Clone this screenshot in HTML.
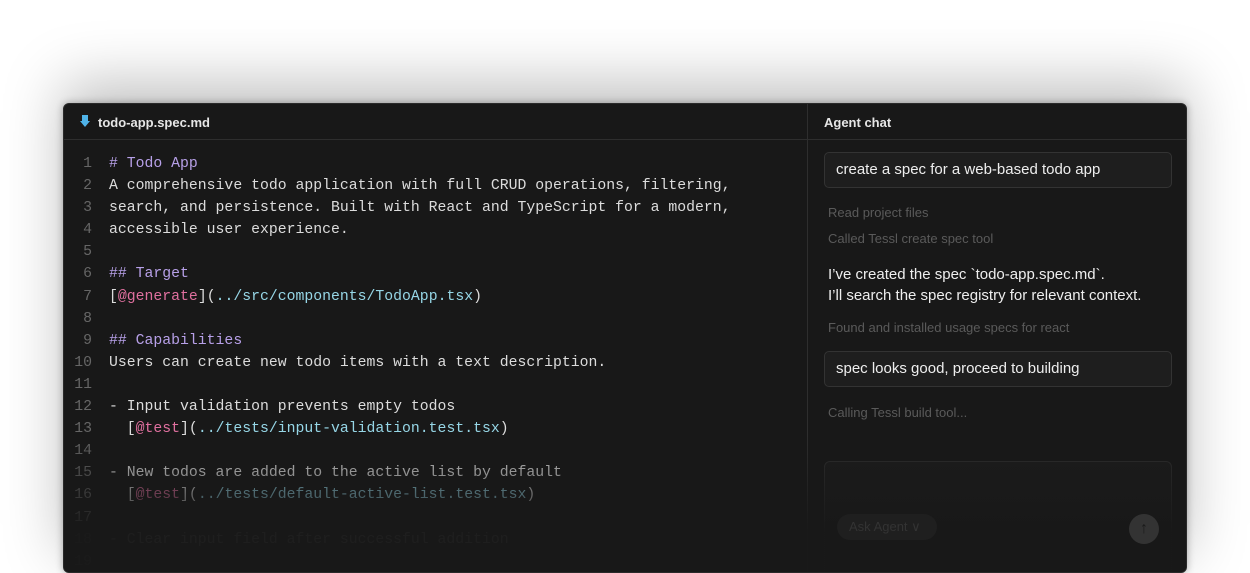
<!DOCTYPE html>
<html><head><style>
*{margin:0;padding:0;box-sizing:border-box}
body{width:1250px;height:552px;background:#fff;overflow:hidden;position:relative;font-family:"Liberation Sans",sans-serif}
.win{position:absolute;left:63px;top:103px;width:1124px;height:470px;background:#181818;border-radius:6px;box-shadow:0 -20px 60px rgba(0,0,0,.25),0 0 8px rgba(0,0,0,.3);overflow:hidden;border:1px solid #2a2a2a}
.hdr{position:absolute;top:0;left:0;right:0;height:36px;border-bottom:1px solid #2e2e2e}
.ft{position:absolute;left:34px;top:11px;color:#e6e6e6;font-size:13px;font-weight:bold}
.div{position:absolute;left:743px;top:0;bottom:0;width:1px;background:#2e2e2e}
.code{position:absolute;left:0;top:49px;font-family:"Liberation Mono",monospace;font-size:14.8px;color:#dcdcdc}
.l{height:22.1px;line-height:22.1px;white-space:pre;position:relative}
.n{display:inline-block;width:28px;text-align:right;color:#666;margin-right:17px}
.h{color:#b7a0e8}.p{color:#e0709f}.c{color:#96d6e6}
.ac{position:absolute;left:760px;top:11px;color:#e6e6e6;font-size:13px;font-weight:bold}
.bub{position:absolute;left:760px;width:348px;height:36px;border:1px solid #333;border-radius:5px;background:#1e1e1e;color:#eee;font-size:15px;padding:0 11px;line-height:34px}
.g{position:absolute;left:764px;color:#5a5a5a;font-size:13px}
.m{position:absolute;left:764px;color:#eee;font-size:15px;line-height:21px}
.inp{position:absolute;left:760px;top:357px;width:348px;height:120px;border:1px solid #2e2e2e;border-radius:6px;background:#1c1c1c}
.fade{position:absolute;left:0;right:0;top:330px;height:140px;background:linear-gradient(rgba(24,24,24,0),rgba(24,24,24,.97) 70%)}
</style></head><body>
<div class="win">
<div class="hdr"></div>
<svg style="position:absolute;left:16px;top:11px" width="10" height="13" viewBox="0 0 10 13"><path d="M2 0h6v6h2L5 12 0 6h2z" fill="#4fb3e8"/></svg>
<div class="ft">todo-app.spec.md</div>
<div class="div"></div>
<div class="code">
<div class="l"><span class="n">1</span><span class="h"># Todo App</span></div>
<div class="l"><span class="n">2</span>A comprehensive todo application with full CRUD operations, filtering,</div>
<div class="l"><span class="n">3</span>search, and persistence. Built with React and TypeScript for a modern,</div>
<div class="l"><span class="n">4</span>accessible user experience.</div>
<div class="l"><span class="n">5</span></div>
<div class="l"><span class="n">6</span><span class="h">## Target</span></div>
<div class="l"><span class="n">7</span>[<span class="p">@generate</span>](<span class="c">../src/components/TodoApp.tsx</span>)</div>
<div class="l"><span class="n">8</span></div>
<div class="l"><span class="n">9</span><span class="h">## Capabilities</span></div>
<div class="l"><span class="n">10</span>Users can create new todo items with a text description.</div>
<div class="l"><span class="n">11</span></div>
<div class="l"><span class="n">12</span>- Input validation prevents empty todos</div>
<div class="l"><span class="n">13</span>  [<span class="p">@test</span>](<span class="c">../tests/input-validation.test.tsx</span>)</div>
<div class="l"><span class="n">14</span></div>
<div class="l"><span class="n">15</span>- New todos are added to the active list by default</div>
<div class="l"><span class="n">16</span>  [<span class="p">@test</span>](<span class="c">../tests/default-active-list.test.tsx</span>)</div>
<div class="l"><span class="n">17</span></div>
<div class="l"><span class="n">18</span>- Clear input field after successful addition</div>
<div class="l"><span class="n">19</span></div>
</div>
<div class="ac">Agent chat</div>
<div class="bub" style="top:48px">create a spec for a web-based todo app</div>
<div class="g" style="top:101px">Read project files</div>
<div class="g" style="top:127px">Called Tessl create spec tool</div>
<div class="m" style="top:160px">I’ve created the spec `todo-app.spec.md`.<br>I’ll search the spec registry for relevant context.</div>
<div class="g" style="top:216px">Found and installed usage specs for react</div>
<div class="bub" style="top:247px">spec looks good, proceed to building</div>
<div class="g" style="top:301px">Calling Tessl build tool...</div>
<div class="inp"></div>
<div class="fade"></div>
<div style="position:absolute;left:773px;top:410px;width:100px;height:26px;border-radius:13px;background:#1f1f1f;color:#333;font-size:13px;line-height:26px;padding-left:12px">Ask Agent ∨</div>
<div style="position:absolute;left:1065px;top:410px;width:30px;height:30px;border-radius:50%;background:#333;color:#1a1a1a;text-align:center;line-height:30px;font-size:16px">↑</div>
</div>
</body></html>
